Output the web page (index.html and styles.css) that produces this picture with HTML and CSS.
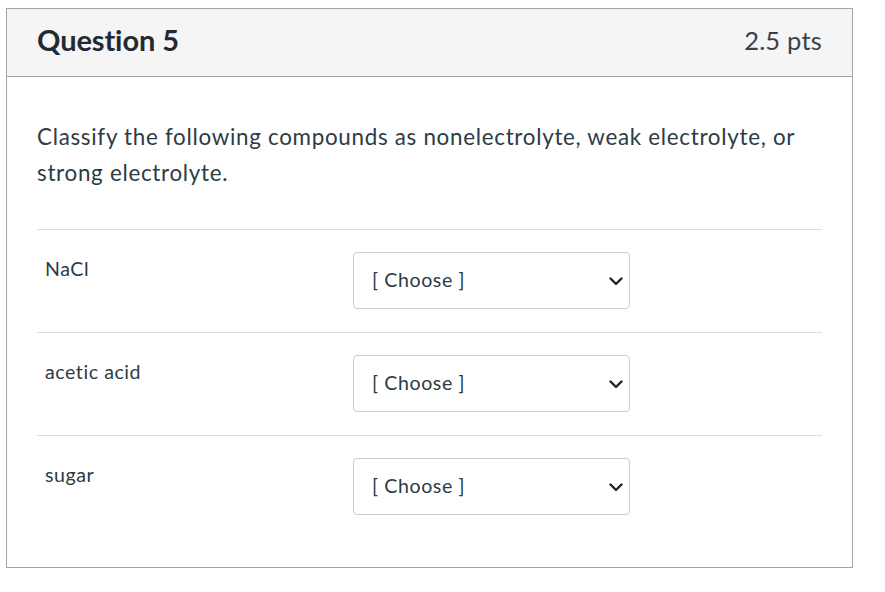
FILE: index.html
```html
<!DOCTYPE html>
<html lang="en">
<head>
<meta charset="utf-8">
<title>Question 5</title>
<link rel="stylesheet" href="styles.css">
</head>
<body>
<div class="card">
  <div class="header">
    <h2 class="title">Question 5</h2>
    <div class="pts">2.5 pts</div>
  </div>
  <div class="body">
    <p class="prompt">Classify the following compounds as nonelectrolyte, weak electrolyte, or strong electrolyte.</p>
    <div class="rows">
      <div class="row">
        <div class="label">NaCl</div>
        <div class="select"><span class="choose">[ Choose ]</span>
          <svg class="chev" width="14" height="9" viewBox="0 0 14 9"><path d="M1.5 1.5 L7 7 L12.5 1.5" fill="none" stroke="#1b2630" stroke-width="2.4" stroke-linecap="round" stroke-linejoin="round"/></svg>
        </div>
      </div>
      <div class="row">
        <div class="label">acetic acid</div>
        <div class="select"><span class="choose">[ Choose ]</span>
          <svg class="chev" width="14" height="9" viewBox="0 0 14 9"><path d="M1.5 1.5 L7 7 L12.5 1.5" fill="none" stroke="#1b2630" stroke-width="2.4" stroke-linecap="round" stroke-linejoin="round"/></svg>
        </div>
      </div>
      <div class="row">
        <div class="label">sugar</div>
        <div class="select"><span class="choose">[ Choose ]</span>
          <svg class="chev" width="14" height="9" viewBox="0 0 14 9"><path d="M1.5 1.5 L7 7 L12.5 1.5" fill="none" stroke="#1b2630" stroke-width="2.4" stroke-linecap="round" stroke-linejoin="round"/></svg>
        </div>
      </div>
    </div>
  </div>
</div>
</body>
</html>
```

FILE: styles.css
```css
* { box-sizing: border-box; }
html, body { margin: 0; padding: 0; background: #fff; }
body {
  font-family: Lato, "Open Sans", "Liberation Sans", sans-serif;
  color: #2d3b45;
  padding: 8px 0 0 6px;
}
.card {
  width: 847px;
  height: 560px;
  border: 1px solid #a5a5a5;
  background: #fff;
}
.header {
  height: 68px;
  background: #f5f5f5;
  border-bottom: 1px solid #a5a5a5;
  display: flex;
  align-items: center;
  justify-content: space-between;
  padding: 0 30px 6px 30px;
}
.title {
  margin: 0;
  font-size: 29px;
  font-weight: 700;
  color: #1f2a33;
  letter-spacing: -0.1px;
}
.pts {
  font-size: 25.5px;
  font-weight: 400;
  color: #3a4249;
  letter-spacing: 0.2px;
}
.body {
  padding: 42px 30px 0 30px;
}
.prompt {
  margin: 0 0 38px 0;
  font-size: 22.4px;
  line-height: 36px;
  letter-spacing: 0.7px;
  color: #2d3b45;
}
.row {
  display: grid;
  grid-template-columns: 316px 277px;
  border-top: 1px solid #dcdcdc;
  padding: 22px 0 23px 0;
}
.label {
  padding: 2px 0 0 8px;
  font-size: 19.6px;
  line-height: 30px;
  letter-spacing: 0.55px;
  color: #2d3b45;
}
.select {
  height: 57px;
  border: 1px solid #c8cdd1;
  border-radius: 4px;
  display: flex;
  align-items: center;
  justify-content: space-between;
  padding: 0 6px 0 18px;
  font-size: 19.6px;
  letter-spacing: 0.6px;
  color: #2d3b45;
}
.choose { margin-top: -3px; }
.chev { display: block; margin-top: 1px; }
```
